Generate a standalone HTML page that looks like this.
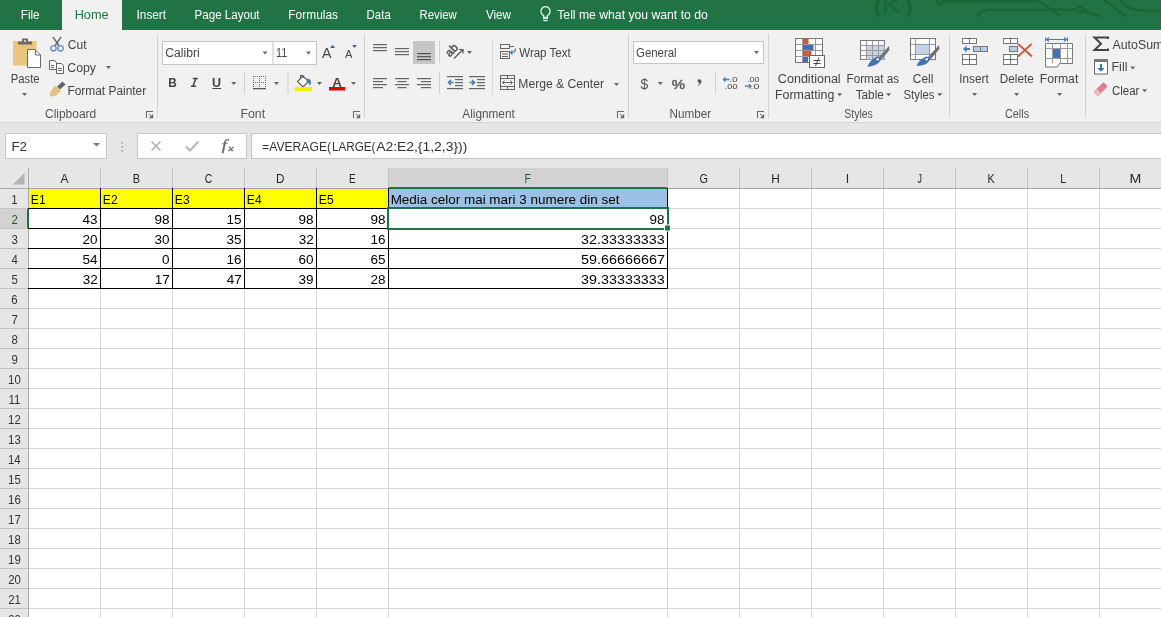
<!DOCTYPE html><html><head><meta charset="utf-8"><style>
*{margin:0;padding:0}
body{width:1161px;height:617px;overflow:hidden;background:#fff}
svg{display:block;font-family:"Liberation Sans",sans-serif;will-change:transform}
</style></head><body>
<svg width="1161" height="617" viewBox="0 0 1161 617">
<rect x="0" y="0" width="1161" height="30" fill="#217346" />
<g fill="none" stroke="#1b6639" stroke-width="2.6"><path d="M879 -1 Q873.5 8 879 16.5" stroke-width="3.2"/><path d="M907 -1 Q913 8 907.5 16.5" stroke-width="3.2"/><path d="M885.5 0 V13 M886 6 L898.5 -1 M890 4 L899 12.5"/><path d="M944 1.5 H1039 L1061 16"/><circle cx="940" cy="1.2" r="3"/><path d="M977 16.5 Q982 9.8 991 9.8 H1076.5"/><circle cx="1080" cy="9.8" r="3"/><path d="M1083 10.5 L1100 16.5"/><path d="M1103 -1 L1126 16.5"/><path d="M1120 -1 Q1126 10 1142 10.5 H1161"/></g>
<rect x="62" y="0" width="60" height="30" fill="#f1f1f1" />
<text x="20.76" y="19" font-size="12" fill="#fff" textLength="18.88" lengthAdjust="spacingAndGlyphs" >File</text>
<text x="136.54" y="19" font-size="12" fill="#fff" textLength="29.53" lengthAdjust="spacingAndGlyphs" >Insert</text>
<text x="194.57" y="19" font-size="12" fill="#fff" textLength="64.99" lengthAdjust="spacingAndGlyphs" >Page Layout</text>
<text x="288.35" y="19" font-size="12" fill="#fff" textLength="49.64" lengthAdjust="spacingAndGlyphs" >Formulas</text>
<text x="366.58" y="19" font-size="12" fill="#fff" textLength="24.25" lengthAdjust="spacingAndGlyphs" >Data</text>
<text x="419.60" y="19" font-size="12" fill="#fff" textLength="37.09" lengthAdjust="spacingAndGlyphs" >Review</text>
<text x="485.94" y="19" font-size="12" fill="#fff" textLength="25.05" lengthAdjust="spacingAndGlyphs" >View</text>
<text x="557.26" y="19" font-size="12" fill="#fff" textLength="150.53" lengthAdjust="spacingAndGlyphs" >Tell me what you want to do</text>
<text x="74.68" y="19" font-size="12" fill="#217346" textLength="33.92" lengthAdjust="spacingAndGlyphs" >Home</text>
<g fill="none" stroke="#e8f6ec" stroke-width="1.3"><path d="M543.6 17.5 v-2 a4.6 4.6 0 1 1 3.8 0 v2 z"/><path d="M543.3 20.5h4.4"/></g><rect x="543" y="17" width="5" height="1.8" fill="#e8f6ec"/>
<rect x="0" y="30" width="1161" height="92" fill="#f1f1f1" />
<rect x="0" y="122" width="1161" height="1" fill="#d5d5d5" />
<rect x="157" y="34" width="1" height="84" fill="#d4d4d4" />
<rect x="364" y="34" width="1" height="84" fill="#d4d4d4" />
<rect x="628" y="34" width="1" height="84" fill="#d4d4d4" />
<rect x="768" y="34" width="1" height="84" fill="#d4d4d4" />
<rect x="949" y="34" width="1" height="84" fill="#d4d4d4" />
<rect x="1085" y="34" width="1" height="84" fill="#d4d4d4" />
<text x="45.00" y="117.6" font-size="12" fill="#555" textLength="51.18" lengthAdjust="spacingAndGlyphs" >Clipboard</text>
<text x="240.52" y="117.6" font-size="12" fill="#555" textLength="24.56" lengthAdjust="spacingAndGlyphs" >Font</text>
<text x="462.30" y="117.6" font-size="12" fill="#555" textLength="52.48" lengthAdjust="spacingAndGlyphs" >Alignment</text>
<text x="669.56" y="117.6" font-size="12" fill="#555" textLength="41.63" lengthAdjust="spacingAndGlyphs" >Number</text>
<text x="844.33" y="117.6" font-size="12" fill="#555" textLength="28.52" lengthAdjust="spacingAndGlyphs" >Styles</text>
<text x="1004.96" y="117.6" font-size="12" fill="#555" textLength="24.10" lengthAdjust="spacingAndGlyphs" >Cells</text>
<path d="M146.5 118v-6.5h6.5" fill="none" stroke="#6a6a6a" stroke-width="1.1"/><path d="M153.2 113.8v4.4h-4.4z" fill="#6a6a6a"/><path d="M149 114l3 3" stroke="#6a6a6a" stroke-width="1"/>
<path d="M353.5 118v-6.5h6.5" fill="none" stroke="#6a6a6a" stroke-width="1.1"/><path d="M360.2 113.8v4.4h-4.4z" fill="#6a6a6a"/><path d="M356 114l3 3" stroke="#6a6a6a" stroke-width="1"/>
<path d="M617.5 118v-6.5h6.5" fill="none" stroke="#6a6a6a" stroke-width="1.1"/><path d="M624.2 113.8v4.4h-4.4z" fill="#6a6a6a"/><path d="M620 114l3 3" stroke="#6a6a6a" stroke-width="1"/>
<path d="M757.5 118v-6.5h6.5" fill="none" stroke="#6a6a6a" stroke-width="1.1"/><path d="M764.2 113.8v4.4h-4.4z" fill="#6a6a6a"/><path d="M760 114l3 3" stroke="#6a6a6a" stroke-width="1"/>
<rect x="13" y="41" width="23.5" height="24.5" fill="#e9c57e" />
<path d="M18 44.5 v-3 h4 v-3 h6 v3 h4 v3 z" fill="#6b6b6b"/><rect x="24" y="40" width="2" height="2" fill="#e9c57e"/>
<path d="M27.5 49.5 h7.5 l5.5 5.5 v12.5 h-13 z" fill="#fff" stroke="#6b6b6b" stroke-width="1"/><path d="M35.5 49.5v5.5h5" fill="none" stroke="#6b6b6b"/>
<text x="10.80" y="82.8" font-size="12" fill="#444" textLength="28.83" lengthAdjust="spacingAndGlyphs" >Paste</text>
<path d="M22.0 93h5l-2.5 3z" fill="#666"/>
<g fill="none" stroke-width="1.4"><path d="M53 37 L59.5 46.5 M61 37 L54.5 46.5" stroke="#666"/><circle cx="53.5" cy="48.3" r="2.7" stroke="#6b93c6"/><circle cx="60.5" cy="48.3" r="2.7" stroke="#6b93c6"/></g>
<text x="67.80" y="49" font-size="12" fill="#444" textLength="18.78" lengthAdjust="spacingAndGlyphs" >Cut</text>
<g fill="#f8f8f8" stroke="#666" stroke-width="1"><path d="M49.5 60.5h5l2 2v7h-7z"/><path d="M56.5 63.5h5l2 2v8h-7z"/></g><g stroke="#666" stroke-width="1"><path d="M51 65.5h3M51 67.5h3M58 68.5h4M58 70.5h4"/></g>
<text x="67.39" y="72" font-size="12" fill="#444" textLength="28.61" lengthAdjust="spacingAndGlyphs" >Copy</text>
<path d="M106.0 66h5l-2.5 3z" fill="#666"/>
<path d="M57 86.5 L62.5 81.5 L65.5 84.5 L60 89.5 z" fill="#666"/><path d="M55.5 85.5 L61 91 L56 95.5 Q52 97 50 96 Q49.5 93 51 90.5z" fill="#e3c27f"/>
<text x="67.45" y="94.8" font-size="12" fill="#444" textLength="78.77" lengthAdjust="spacingAndGlyphs" >Format Painter</text>
<rect x="162" y="41" width="154" height="23" fill="#fff"  stroke="#c6c6c6" stroke-width="1" transform="translate(.5 .5)" />
<rect x="272.5" y="41" width="1" height="23" fill="#c6c6c6" />
<text x="165.19" y="56.8" font-size="12" fill="#444" textLength="34.55" lengthAdjust="spacingAndGlyphs" >Calibri</text>
<path d="M262.5 51.5h5l-2.5 3z" fill="#666"/>
<text x="276.09" y="56.8" font-size="12" fill="#444" textLength="11.23" lengthAdjust="spacingAndGlyphs" >11</text>
<path d="M306.0 51.5h5l-2.5 3z" fill="#666"/>
<text x="322.10" y="57.9" font-size="14" fill="#444" textLength="9.53" lengthAdjust="spacingAndGlyphs" >A</text>
<path d="M330 48 l2.6-3.2 l2.6 3.2z" fill="#4a6a8c"/>
<text x="345.00" y="57.9" font-size="11" fill="#444" textLength="7.42" lengthAdjust="spacingAndGlyphs" >A</text>
<path d="M352 45 h5 l-2.5 3z" fill="#4a6a8c"/>
<text x="168.13" y="86.9" font-size="12" fill="#444" textLength="8.52" lengthAdjust="spacingAndGlyphs" font-weight="bold" >B</text>
<path d="M192.8 78.6h5 M190.9 86.3h5 M195.9 78.6 L192.9 86.3" fill="none" stroke="#444" stroke-width="1.5"/>
<text x="211.95" y="86.9" font-size="12" fill="#444" textLength="9.03" lengthAdjust="spacingAndGlyphs" font-weight="bold" >U</text>
<rect x="212.3" y="88" width="8.7" height="1" fill="#444" />
<path d="M231.2 82h5l-2.5 3z" fill="#666"/>
<rect x="287.5" y="72" width="1" height="22" fill="#cfcfcf" />
<rect x="244" y="72" width="1" height="22" fill="#cfcfcf" />
<g fill="#666"><rect x="253" y="76" width="1" height="1"/><rect x="253" y="78" width="1" height="1"/><rect x="253" y="80" width="1" height="1"/><rect x="253" y="82" width="1" height="1"/><rect x="253" y="84" width="1" height="1"/><rect x="253" y="86" width="1" height="1"/><rect x="255" y="76" width="1" height="1"/><rect x="255" y="82" width="1" height="1"/><rect x="257" y="76" width="1" height="1"/><rect x="257" y="82" width="1" height="1"/><rect x="259" y="76" width="1" height="1"/><rect x="259" y="78" width="1" height="1"/><rect x="259" y="80" width="1" height="1"/><rect x="259" y="82" width="1" height="1"/><rect x="259" y="84" width="1" height="1"/><rect x="259" y="86" width="1" height="1"/><rect x="261" y="76" width="1" height="1"/><rect x="261" y="82" width="1" height="1"/><rect x="263" y="76" width="1" height="1"/><rect x="263" y="82" width="1" height="1"/><rect x="265" y="76" width="1" height="1"/><rect x="265" y="78" width="1" height="1"/><rect x="265" y="80" width="1" height="1"/><rect x="265" y="82" width="1" height="1"/><rect x="265" y="84" width="1" height="1"/><rect x="265" y="86" width="1" height="1"/></g>
<rect x="253" y="88" width="13" height="1.3" fill="#555" />
<path d="M274.0 82h5l-2.5 3z" fill="#666"/>
<path d="M297.5 81.5 L303 76 L308.5 81.5 L303 87z" fill="#fff" stroke="#555" stroke-width="1.1"/><path d="M300.5 79 v-3.5 h2.5 v2.5" fill="none" stroke="#555" stroke-width="1"/><path d="M307.5 78.5 q3.5 0.5 3.5 4 q0 2 -1.2 3 q-1 -3 -3.5 -4z" fill="#4a78b0"/>
<rect x="294.5" y="87" width="17.5" height="4" fill="#f2f200" />
<path d="M317.0 82h5l-2.5 3z" fill="#666"/>
<text x="332.16" y="86.5" font-size="12" fill="#444" textLength="9.70" lengthAdjust="spacingAndGlyphs" font-weight="bold" >A</text>
<rect x="329" y="87" width="16" height="3.5" fill="#e00000" />
<path d="M351.0 82h5l-2.5 3z" fill="#666"/>
<rect x="373" y="44" width="14" height="1.2" fill="#666" />
<rect x="373" y="47" width="14" height="1.2" fill="#666" />
<rect x="373" y="50" width="14" height="1.2" fill="#666" />
<rect x="395" y="48" width="14" height="1.2" fill="#666" />
<rect x="395" y="51" width="14" height="1.2" fill="#666" />
<rect x="395" y="54" width="14" height="1.2" fill="#666" />
<rect x="413" y="41" width="22" height="23" fill="#c6c6c6" />
<rect x="417" y="53" width="14" height="1.2" fill="#555" />
<rect x="417" y="56" width="14" height="1.2" fill="#555" />
<rect x="417" y="59" width="14" height="1.2" fill="#555" />
<rect x="439" y="41" width="1" height="22" fill="#d0d0d0" />
<g transform="translate(451.5 50) rotate(-45)"><text x="-6.5" y="4" font-size="11.5" fill="#555" stroke="#555" stroke-width="0.5" textLength="13" lengthAdjust="spacingAndGlyphs">ab</text></g>
<path d="M454 58.5 L462.5 50 M459 49.5 h4 v4" fill="none" stroke="#555" stroke-width="1.2"/>
<path d="M467.0 51h5l-2.5 3z" fill="#666"/>
<rect x="373" y="78" width="14" height="1.2" fill="#666" />
<rect x="373" y="81" width="10" height="1.2" fill="#666" />
<rect x="373" y="84" width="14" height="1.2" fill="#666" />
<rect x="373" y="87" width="10" height="1.2" fill="#666" />
<rect x="395.0" y="78" width="14" height="1.2" fill="#666" />
<rect x="397.5" y="81" width="9" height="1.2" fill="#666" />
<rect x="395.0" y="84" width="14" height="1.2" fill="#666" />
<rect x="397.5" y="87" width="9" height="1.2" fill="#666" />
<rect x="417" y="78" width="14" height="1.2" fill="#666" />
<rect x="421" y="81" width="10" height="1.2" fill="#666" />
<rect x="417" y="84" width="14" height="1.2" fill="#666" />
<rect x="421" y="87" width="10" height="1.2" fill="#666" />
<rect x="439" y="72" width="1" height="22" fill="#d0d0d0" />
<rect x="447" y="76" width="16" height="1.2" fill="#666" />
<rect x="455" y="79" width="8" height="1.2" fill="#666" />
<rect x="455" y="82" width="8" height="1.2" fill="#666" />
<rect x="455" y="85" width="8" height="1.2" fill="#666" />
<rect x="447" y="88" width="16" height="1.2" fill="#666" />
<path d="M453.5 82.5 h-5 M451 80 l-2.5 2.5 l2.5 2.5" fill="none" stroke="#4a7bb0" stroke-width="1.6"/>
<rect x="469" y="76" width="16" height="1.2" fill="#666" />
<rect x="477" y="79" width="8" height="1.2" fill="#666" />
<rect x="477" y="82" width="8" height="1.2" fill="#666" />
<rect x="477" y="85" width="8" height="1.2" fill="#666" />
<rect x="469" y="88" width="16" height="1.2" fill="#666" />
<path d="M469.5 82.5 h5 M472 80 l2.5 2.5 l-2.5 2.5" fill="none" stroke="#4a7bb0" stroke-width="1.6"/>
<rect x="492" y="40" width="1" height="55" fill="#d9d9d9" />
<g fill="none" stroke="#666" stroke-width="1"><rect x="500.5" y="44.5" width="9" height="4"/><path d="M509.5 46.5h4.5"/><rect x="500.5" y="51.5" width="9" height="7"/><path d="M502 54h6M502 56.5h6"/></g>
<path d="M515.5 48.5 q0 4 -4 4 M512.5 50.5 l-2 2 l2 2" fill="none" stroke="#4a7bb0" stroke-width="1.2"/>
<text x="519.24" y="57.4" font-size="12" fill="#444" textLength="51.37" lengthAdjust="spacingAndGlyphs" >Wrap Text</text>
<g fill="none" stroke="#666" stroke-width="1"><rect x="500.5" y="75.5" width="14" height="14"/><path d="M500.5 78.5h14M500.5 86.5h14M507.5 75.5v3M507.5 86.5v3"/></g>
<path d="M502.5 82.5h10 M504.5 80.5l-2 2l2 2 M510.5 80.5l2 2l-2 2" fill="none" stroke="#666" stroke-width="1"/>
<text x="518.33" y="87.7" font-size="12" fill="#444" textLength="85.60" lengthAdjust="spacingAndGlyphs" >Merge &amp; Center</text>
<path d="M614.0 83h5l-2.5 3z" fill="#666"/>
<rect x="633.5" y="41.5" width="130" height="22" fill="#fff"  stroke="#c6c6c6" stroke-width="1"/>
<text x="636.03" y="56.9" font-size="12" fill="#444" textLength="40.54" lengthAdjust="spacingAndGlyphs" >General</text>
<path d="M754.0 51h5l-2.5 3z" fill="#666"/>
<text x="640.56" y="88.5" font-size="15" fill="#555" textLength="7.77" lengthAdjust="spacingAndGlyphs" >$</text>
<path d="M657.8 82h5l-2.5 3z" fill="#666"/>
<text x="671.88" y="89" font-size="13" fill="#555" textLength="13.34" lengthAdjust="spacingAndGlyphs"  stroke="#555" stroke-width="0.4">%</text>
<path d="M697.5 81.3 a2 2 0 0 1 4 -0.2 q0 3 -3.4 4.8 l-0.4 -0.5 q1.6 -1.2 1.8 -2.4 a2 2 0 0 1 -2 -1.7z" fill="#5a5a5a"/>
<rect x="715" y="72" width="1" height="22" fill="#d0d0d0" />
<path d="M729.5 79.5h-6 M725.5 77.5l-2 2l2 2" fill="none" stroke="#4a7bb0" stroke-width="1.3"/>
<text x="729.07" y="81.8" font-size="7.5" fill="#444" textLength="8.57" lengthAdjust="spacingAndGlyphs" >.0</text>
<text x="724.77" y="88.5" font-size="7.5" fill="#444" textLength="12.86" lengthAdjust="spacingAndGlyphs" >.00</text>
<text x="746.99" y="81.8" font-size="7.5" fill="#444" textLength="12.53" lengthAdjust="spacingAndGlyphs" >.00</text>
<text x="750.52" y="88.5" font-size="7.5" fill="#444" textLength="9.04" lengthAdjust="spacingAndGlyphs" >.0</text>
<path d="M745 86.2h6 M749 84.2l2 2l-2 2" fill="none" stroke="#4a7bb0" stroke-width="1.3"/>
<g fill="#fff" stroke="#777" stroke-width="1"><rect x="795.5" y="38.5" width="27" height="24"/></g>
<rect x="802.5" y="38.5" width="6" height="6" fill="#d4573a" />
<rect x="802.5" y="44.5" width="11" height="6" fill="#3f6fb5" />
<rect x="802.5" y="50.5" width="9" height="6" fill="#d4573a" />
<rect x="802.5" y="56.5" width="5.5" height="6" fill="#3f6fb5" />
<g fill="none" stroke="#999" stroke-width="1"><path d="M795.5 44.5h27M795.5 50.5h27M795.5 56.5h27M802.5 38.5v24M815.5 38.5v24"/><rect x="795.5" y="38.5" width="27" height="24" stroke="#777"/></g>
<rect x="809.5" y="55.5" width="15" height="12" fill="#fff" stroke="#666"/><path d="M813.5 60.5h7M813.5 63.5h7M819 57.5l-3.5 8.5" stroke="#444" stroke-width="1"/>
<text x="777.87" y="82.7" font-size="12" fill="#444" textLength="62.79" lengthAdjust="spacingAndGlyphs" >Conditional</text>
<text x="774.90" y="98.5" font-size="12" fill="#444" textLength="59.50" lengthAdjust="spacingAndGlyphs" >Formatting</text>
<path d="M837.2 93.3h5l-2.5 3z" fill="#666"/>
<rect x="860.5" y="40.5" width="24" height="19" fill="#fff" stroke="#777"/><rect x="866.5" y="45" width="18" height="14.5" fill="#c5d3e2"/>
<g fill="none" stroke="#999"><path d="M860.5 45.5h24M860.5 50.5h24M860.5 55.5h24M866.5 40.5v19M872.5 40.5v19M878.5 40.5v19"/></g>
<path d="M889 46 L878.5 57.5 L881 60 L889.5 50z" fill="#737373"/><path d="M877 56.5 q4 0.5 3.5 4 q-3 5 -13 6.5 q2 -7 9.5 -10.5z" fill="#3f73b5"/><path d="M877.5 58 q2 0 1.5 2 q-2 1 -3 -0.5z" fill="#fff"/>
<text x="846.57" y="82.7" font-size="12" fill="#444" textLength="52.56" lengthAdjust="spacingAndGlyphs" >Format as</text>
<text x="855.77" y="98.5" font-size="12" fill="#444" textLength="27.97" lengthAdjust="spacingAndGlyphs" >Table</text>
<path d="M886.1 93.3h5l-2.5 3z" fill="#666"/>
<rect x="910.5" y="38.5" width="25" height="21" fill="#fff" stroke="#777"/><rect x="915.5" y="44.5" width="14.5" height="10" fill="#c3d4ea"/>
<g fill="none" stroke="#999"><path d="M910.5 44.5h25M910.5 54.5h25M915.5 38.5v21M929.5 38.5v21"/></g>
<path d="M939 45 L927.5 57.5 L930 60 L939.5 49z" fill="#737373"/><path d="M926 56.5 q4 0.5 3.5 4 q-3 5 -13 5.5 q2 -6 9.5 -9.5z" fill="#3f73b5"/><path d="M926.5 58 q2 0 1.5 2 q-2 1 -3 -0.5z" fill="#fff"/>
<text x="912.80" y="82.7" font-size="12" fill="#444" textLength="20.50" lengthAdjust="spacingAndGlyphs" >Cell</text>
<text x="903.59" y="98.5" font-size="12" fill="#444" textLength="30.78" lengthAdjust="spacingAndGlyphs" >Styles</text>
<path d="M937.2 93.3h5l-2.5 3z" fill="#666"/>
<rect x="962.5" y="38.5" width="14" height="5" fill="#fff" stroke="#777"/>
<path d="M969.5 38.5v5" stroke="#777" fill="none"/>
<rect x="973.5" y="46.5" width="14" height="5" fill="#b9cde4" stroke="#777"/>
<path d="M980.5 46.5v5" stroke="#777" fill="none"/>
<path d="M970 49h-5.5" stroke="#4a7bb0" stroke-width="2"/><path d="M963 49 l3.6 -3.4 v6.8z" fill="#4a7bb0"/>
<rect x="962.5" y="54.5" width="14" height="10" fill="#fff" stroke="#777"/>
<path d="M969.5 54.5v10M962.5 59.5h14" stroke="#777" fill="none"/>
<text x="959.34" y="82.9" font-size="12" fill="#444" textLength="29.33" lengthAdjust="spacingAndGlyphs" >Insert</text>
<path d="M972.1 93h5l-2.5 3z" fill="#666"/>
<rect x="1003.5" y="38.5" width="14" height="5" fill="#fff" stroke="#777"/>
<path d="M1010.5 38.5v5" stroke="#777" fill="none"/>
<rect x="1009.5" y="46.5" width="8" height="5" fill="#b9cde4" stroke="#777"/>
<rect x="1003.5" y="54.5" width="14" height="10" fill="#fff" stroke="#777"/>
<path d="M1010.5 54.5v10M1003.5 59.5h14" stroke="#777" fill="none"/>
<path d="M1018 44 L1032 56.5 M1031.5 44 L1018 56.5" stroke="#d05538" stroke-width="1.8"/>
<text x="999.76" y="82.9" font-size="12" fill="#444" textLength="33.98" lengthAdjust="spacingAndGlyphs" >Delete</text>
<path d="M1014.1 93h5l-2.5 3z" fill="#666"/>
<path d="M1045.5 37.5v4 M1067.5 37.5v4 M1046 39.5h21 M1049 37.5l-2.5 2l2.5 2 M1064 37.5l2.5 2l-2.5 2" fill="none" stroke="#4a7bb0" stroke-width="1.1"/>
<path d="M1045.5 43.5h27v20h-13l-2 3.5h-12z" fill="#fff" stroke="#777"/>
<path d="M1052.5 43.5v20M1060.5 43.5v20M1067.5 43.5v20M1045.5 48.5h27M1045.5 58.5h27" stroke="#999" fill="none"/>
<rect x="1053" y="49" width="7" height="9" fill="#3f74b8" />
<text x="1039.73" y="82.9" font-size="12" fill="#444" textLength="38.56" lengthAdjust="spacingAndGlyphs" >Format</text>
<path d="M1057.1 93h5l-2.5 3z" fill="#666"/>
<path d="M1108 39 V37.5 H1094.5 L1101 43.8 L1094.5 50 H1108 V48.5" fill="none" stroke="#444" stroke-width="2" stroke-linejoin="miter"/>
<text x="1112.50" y="48.7" font-size="12" fill="#444" textLength="50.78" lengthAdjust="spacingAndGlyphs" >AutoSum</text>
<rect x="1094.5" y="59.5" width="13" height="14.5" fill="#fff" stroke="#666"/><rect x="1094" y="59" width="14" height="3" fill="#777"/>
<path d="M1101 64v5" stroke="#3f73b5" stroke-width="2"/><path d="M1097.3 68 h7.4 l-3.7 3.8z" fill="#3f73b5"/>
<text x="1111.50" y="71.4" font-size="12" fill="#444" textLength="15.94" lengthAdjust="spacingAndGlyphs" >Fill</text>
<path d="M1130.2 66.4h5l-2.5 3z" fill="#666"/>
<g transform="translate(1100.7 89.2) rotate(-45)"><rect x="-7" y="-3" width="14" height="6" rx="1" fill="#e27c90"/><rect x="-7" y="-3" width="4.5" height="6" rx="1" fill="#f2b6c2"/></g>
<text x="1111.92" y="94.6" font-size="12" fill="#444" textLength="27.50" lengthAdjust="spacingAndGlyphs" >Clear</text>
<path d="M1142.1 89.3h5l-2.5 3z" fill="#666"/>
<rect x="0" y="123" width="1161" height="65" fill="#e6e6e6" />
<rect x="5.5" y="133.5" width="101" height="25" fill="#fff" stroke="#c6c6c6"/>
<text x="11.43" y="151" font-size="13" fill="#333" textLength="15.56" lengthAdjust="spacingAndGlyphs" >F2</text>
<path d="M93.0 143h7l-3.5 3.5z" fill="#777"/>
<rect x="121.5" y="142" width="1.5" height="1.5" fill="#999" />
<rect x="121.5" y="146" width="1.5" height="1.5" fill="#999" />
<rect x="121.5" y="150" width="1.5" height="1.5" fill="#999" />
<rect x="137.5" y="133.5" width="109" height="25" fill="#fff" stroke="#c6c6c6"/>
<path d="M151.5 141.5l9 9M160.5 141.5l-9 9" stroke="#b0b0b0" stroke-width="1.6"/>
<path d="M186 146.5l4 4l8.5 -9" fill="none" stroke="#b8b8b8" stroke-width="2.2"/>
<text x="221.82" y="150" font-size="14" fill="#666" textLength="5.05" lengthAdjust="spacingAndGlyphs" font-style="italic" font-family="Liberation Serif"  stroke="#666" stroke-width="0.3">f</text>
<text x="228.19" y="151" font-size="9" fill="#666" textLength="5.52" lengthAdjust="spacingAndGlyphs" font-style="italic" font-family="Liberation Serif"  stroke="#666" stroke-width="0.3">x</text>
<rect x="251.5" y="133.5" width="915" height="25" fill="#fff" stroke="#c6c6c6"/>
<text x="262.09" y="151" font-size="12.5" fill="#333" textLength="69.00" lengthAdjust="spacingAndGlyphs" >=AVERAGE(</text>
<text x="331.96" y="151" font-size="12.5" fill="#333" textLength="43.53" lengthAdjust="spacingAndGlyphs" >LARGE(</text>
<text x="376.20" y="151" font-size="12.5" fill="#333" textLength="91.11" lengthAdjust="spacingAndGlyphs" >A2:E2,{1,2,3}))</text>
<rect x="0" y="168" width="1161" height="20" fill="#e6e6e6" />
<rect x="0" y="188" width="28" height="429" fill="#e6e6e6" />
<rect x="389" y="168" width="278" height="20" fill="#d2d2d2" />
<rect x="0" y="209" width="28" height="19" fill="#d2d2d2" />
<rect x="29" y="189" width="1132" height="428" fill="#fff" />
<path d="M100.5 189V617M172.5 189V617M244.5 189V617M316.5 189V617M388.5 189V617M667.5 189V617M739.5 189V617M811.5 189V617M883.5 189V617M955.5 189V617M1027.5 189V617M1099.5 189V617M1171.5 189V617M29 208.5H1161M29 228.5H1161M29 248.5H1161M29 268.5H1161M29 288.5H1161M29 308.5H1161M29 328.5H1161M29 348.5H1161M29 368.5H1161M29 388.5H1161M29 408.5H1161M29 428.5H1161M29 448.5H1161M29 468.5H1161M29 488.5H1161M29 508.5H1161M29 528.5H1161M29 548.5H1161M29 568.5H1161M29 588.5H1161M29 608.5H1161M29 628.5H1161" stroke="#d4d4d4" fill="none"/>
<path d="M100.5 168V188M172.5 168V188M244.5 168V188M316.5 168V188M388.5 168V188M667.5 168V188M739.5 168V188M811.5 168V188M883.5 168V188M955.5 168V188M1027.5 168V188M1099.5 168V188M1171.5 168V188M0 208.5H28M0 228.5H28M0 248.5H28M0 268.5H28M0 288.5H28M0 308.5H28M0 328.5H28M0 348.5H28M0 368.5H28M0 388.5H28M0 408.5H28M0 428.5H28M0 448.5H28M0 468.5H28M0 488.5H28M0 508.5H28M0 528.5H28M0 548.5H28M0 568.5H28M0 588.5H28M0 608.5H28M0 628.5H28" stroke="#c2c2c2" fill="none"/>
<rect x="28" y="168" width="1" height="449" fill="#a8a8a8" />
<rect x="0" y="188" width="1161" height="1" fill="#a8a8a8" />
<path d="M24.5 173 v11.5 h-11.5z" fill="#b4b4b4"/>
<text x="60.52" y="183" font-size="13" fill="#262626" textLength="7.98" lengthAdjust="spacingAndGlyphs" >A</text>
<text x="132.71" y="183" font-size="13" fill="#262626" textLength="7.28" lengthAdjust="spacingAndGlyphs" >B</text>
<text x="204.68" y="183" font-size="13" fill="#262626" textLength="7.51" lengthAdjust="spacingAndGlyphs" >C</text>
<text x="276.08" y="183" font-size="13" fill="#262626" textLength="8.45" lengthAdjust="spacingAndGlyphs" >D</text>
<text x="348.97" y="183" font-size="13" fill="#262626" textLength="6.68" lengthAdjust="spacingAndGlyphs" >E</text>
<text x="524.62" y="183" font-size="13" fill="#1d5b38" textLength="6.35" lengthAdjust="spacingAndGlyphs" >F</text>
<text x="699.38" y="183" font-size="13" fill="#262626" textLength="8.49" lengthAdjust="spacingAndGlyphs" >G</text>
<text x="771.24" y="183" font-size="13" fill="#262626" textLength="8.54" lengthAdjust="spacingAndGlyphs" >H</text>
<text x="845.78" y="183" font-size="13" fill="#262626" textLength="3.47" lengthAdjust="spacingAndGlyphs" >I</text>
<text x="917.56" y="183" font-size="13" fill="#262626" textLength="4.42" lengthAdjust="spacingAndGlyphs" >J</text>
<text x="987.53" y="183" font-size="13" fill="#262626" textLength="7.20" lengthAdjust="spacingAndGlyphs" >K</text>
<text x="1060.35" y="183" font-size="13" fill="#262626" textLength="5.78" lengthAdjust="spacingAndGlyphs" >L</text>
<text x="1129.62" y="183" font-size="13" fill="#262626" textLength="11.80" lengthAdjust="spacingAndGlyphs" >M</text>
<text x="11.25" y="204" font-size="13" fill="#333" textLength="6.36" lengthAdjust="spacingAndGlyphs" >1</text>
<text x="11.43" y="224" font-size="13" fill="#1d5b38" textLength="6.36" lengthAdjust="spacingAndGlyphs" >2</text>
<text x="11.43" y="244" font-size="13" fill="#333" textLength="6.36" lengthAdjust="spacingAndGlyphs" >3</text>
<text x="11.48" y="264" font-size="13" fill="#333" textLength="6.36" lengthAdjust="spacingAndGlyphs" >4</text>
<text x="11.43" y="284" font-size="13" fill="#333" textLength="6.36" lengthAdjust="spacingAndGlyphs" >5</text>
<text x="11.37" y="304" font-size="13" fill="#333" textLength="6.36" lengthAdjust="spacingAndGlyphs" >6</text>
<text x="11.43" y="324" font-size="13" fill="#333" textLength="6.36" lengthAdjust="spacingAndGlyphs" >7</text>
<text x="11.40" y="344" font-size="13" fill="#333" textLength="6.36" lengthAdjust="spacingAndGlyphs" >8</text>
<text x="11.43" y="364" font-size="13" fill="#333" textLength="6.36" lengthAdjust="spacingAndGlyphs" >9</text>
<text x="8.02" y="384" font-size="13" fill="#333" textLength="12.73" lengthAdjust="spacingAndGlyphs" >10</text>
<text x="8.51" y="404" font-size="13" fill="#333" textLength="11.88" lengthAdjust="spacingAndGlyphs" >11</text>
<text x="8.11" y="424" font-size="13" fill="#333" textLength="12.73" lengthAdjust="spacingAndGlyphs" >12</text>
<text x="8.05" y="444" font-size="13" fill="#333" textLength="12.73" lengthAdjust="spacingAndGlyphs" >13</text>
<text x="7.99" y="464" font-size="13" fill="#333" textLength="12.73" lengthAdjust="spacingAndGlyphs" >14</text>
<text x="8.05" y="484" font-size="13" fill="#333" textLength="12.73" lengthAdjust="spacingAndGlyphs" >15</text>
<text x="8.05" y="504" font-size="13" fill="#333" textLength="12.73" lengthAdjust="spacingAndGlyphs" >16</text>
<text x="8.11" y="524" font-size="13" fill="#333" textLength="12.73" lengthAdjust="spacingAndGlyphs" >17</text>
<text x="8.05" y="544" font-size="13" fill="#333" textLength="12.73" lengthAdjust="spacingAndGlyphs" >18</text>
<text x="8.08" y="564" font-size="13" fill="#333" textLength="12.73" lengthAdjust="spacingAndGlyphs" >19</text>
<text x="8.16" y="584" font-size="13" fill="#333" textLength="12.73" lengthAdjust="spacingAndGlyphs" >20</text>
<text x="8.22" y="604" font-size="13" fill="#333" textLength="12.73" lengthAdjust="spacingAndGlyphs" >21</text>
<text x="8.25" y="624" font-size="13" fill="#333" textLength="12.73" lengthAdjust="spacingAndGlyphs" >22</text>
<rect x="29" y="189" width="359" height="19" fill="#ffff00" />
<rect x="389" y="189" width="278" height="19" fill="#9bc2e6" />
<text x="30.83" y="204" font-size="13" fill="#000" textLength="14.79" lengthAdjust="spacingAndGlyphs" >E1</text>
<text x="102.83" y="204" font-size="13" fill="#000" textLength="14.79" lengthAdjust="spacingAndGlyphs" >E2</text>
<text x="174.83" y="204" font-size="13" fill="#000" textLength="14.79" lengthAdjust="spacingAndGlyphs" >E3</text>
<text x="246.83" y="204" font-size="13" fill="#000" textLength="14.79" lengthAdjust="spacingAndGlyphs" >E4</text>
<text x="318.83" y="204" font-size="13" fill="#000" textLength="14.79" lengthAdjust="spacingAndGlyphs" >E5</text>
<text x="390.67" y="204" font-size="13" fill="#000" textLength="228.83" lengthAdjust="spacingAndGlyphs" >Media celor mai mari 3 numere din set</text>
<text x="82.53" y="224" font-size="13" fill="#000" textLength="15.04" lengthAdjust="spacingAndGlyphs" >43</text>
<text x="154.53" y="224" font-size="13" fill="#000" textLength="15.04" lengthAdjust="spacingAndGlyphs" >98</text>
<text x="226.53" y="224" font-size="13" fill="#000" textLength="15.04" lengthAdjust="spacingAndGlyphs" >15</text>
<text x="298.53" y="224" font-size="13" fill="#000" textLength="15.04" lengthAdjust="spacingAndGlyphs" >98</text>
<text x="370.53" y="224" font-size="13" fill="#000" textLength="15.04" lengthAdjust="spacingAndGlyphs" >98</text>
<text x="649.53" y="224" font-size="13" fill="#000" textLength="15.04" lengthAdjust="spacingAndGlyphs" >98</text>
<text x="82.47" y="244" font-size="13" fill="#000" textLength="15.04" lengthAdjust="spacingAndGlyphs" >20</text>
<text x="154.47" y="244" font-size="13" fill="#000" textLength="15.04" lengthAdjust="spacingAndGlyphs" >30</text>
<text x="226.53" y="244" font-size="13" fill="#000" textLength="15.04" lengthAdjust="spacingAndGlyphs" >35</text>
<text x="298.67" y="244" font-size="13" fill="#000" textLength="15.04" lengthAdjust="spacingAndGlyphs" >32</text>
<text x="370.53" y="244" font-size="13" fill="#000" textLength="15.04" lengthAdjust="spacingAndGlyphs" >16</text>
<text x="581.13" y="244" font-size="13" fill="#000" textLength="83.64" lengthAdjust="spacingAndGlyphs" >32.33333333</text>
<text x="82.40" y="264" font-size="13" fill="#000" textLength="15.04" lengthAdjust="spacingAndGlyphs" >54</text>
<text x="161.97" y="264" font-size="13" fill="#000" textLength="7.52" lengthAdjust="spacingAndGlyphs" >0</text>
<text x="226.53" y="264" font-size="13" fill="#000" textLength="15.04" lengthAdjust="spacingAndGlyphs" >16</text>
<text x="298.47" y="264" font-size="13" fill="#000" textLength="15.04" lengthAdjust="spacingAndGlyphs" >60</text>
<text x="370.53" y="264" font-size="13" fill="#000" textLength="15.04" lengthAdjust="spacingAndGlyphs" >65</text>
<text x="581.13" y="264" font-size="13" fill="#000" textLength="83.78" lengthAdjust="spacingAndGlyphs" >59.66666667</text>
<text x="82.67" y="284" font-size="13" fill="#000" textLength="15.04" lengthAdjust="spacingAndGlyphs" >32</text>
<text x="154.67" y="284" font-size="13" fill="#000" textLength="15.04" lengthAdjust="spacingAndGlyphs" >17</text>
<text x="226.67" y="284" font-size="13" fill="#000" textLength="15.04" lengthAdjust="spacingAndGlyphs" >47</text>
<text x="298.60" y="284" font-size="13" fill="#000" textLength="15.04" lengthAdjust="spacingAndGlyphs" >39</text>
<text x="370.53" y="284" font-size="13" fill="#000" textLength="15.04" lengthAdjust="spacingAndGlyphs" >28</text>
<text x="581.13" y="284" font-size="13" fill="#000" textLength="83.64" lengthAdjust="spacingAndGlyphs" >39.33333333</text>
<path d="M100.5 188V288.5M172.5 188V288.5M244.5 188V288.5M316.5 188V288.5M388.5 188V288.5M667.5 188V288.5M28 208.5H667.5M28 228.5H667.5M28 248.5H667.5M28 268.5H667.5M28 288.5H667.5" stroke="#000" fill="none"/>
<rect x="388" y="208" width="280" height="21" fill="none" stroke="#217346" stroke-width="2"/>
<rect x="664" y="224.5" width="7" height="7" fill="#fff" />
<rect x="665" y="225.5" width="5" height="5" fill="#217346" />
<rect x="389" y="187" width="278" height="2" fill="#217346" />
<rect x="27" y="209" width="2" height="19" fill="#217346" />
</svg></body></html>
